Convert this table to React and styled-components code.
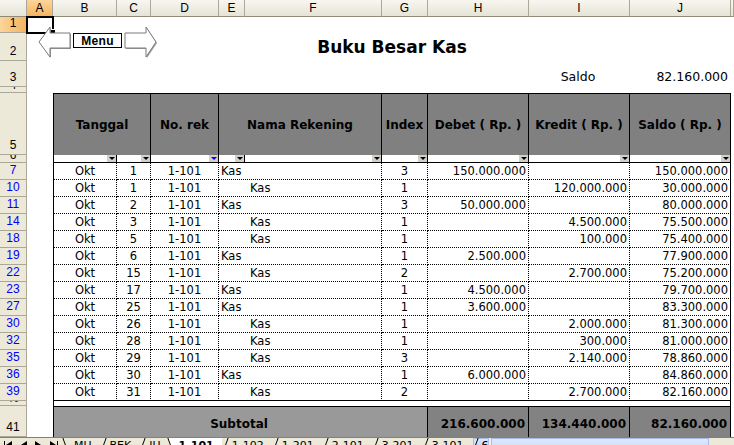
import React from 'react'
import styled, { createGlobalStyle, css } from 'styled-components'

const GlobalStyle = createGlobalStyle`
  html, body {
    margin: 0;
    padding: 0;
    background: #fff;
    overflow: hidden;
  }
  body {
    font-family: 'DejaVu Sans', 'Liberation Sans', sans-serif;
    color: #000;
  }
`

// row header + A..J + leftover strip
const COLS = '27px 26px 64px 34px 68px 26px 137px 46px 101px 101px 101px 1fr'

const Sheet = styled.div`
  position: relative;
  width: 734px;
  height: 445px;
  overflow: hidden;
  background: #fff;
`

const Row = styled.div`
  display: grid;
  grid-template-columns: ${COLS};
  height: ${(p) => p.$h}px;
`

const Cell = styled.div`
  grid-column: span ${(p) => p.$span || 1};
  box-sizing: border-box;
  min-width: 0;
  overflow: hidden;
`

const ColHead = styled(Cell)`
  display: flex;
  align-items: center;
  justify-content: center;
  font: 12px 'Liberation Sans', Arial, sans-serif;
  background: linear-gradient(#f7f6f0, #e6e4d6);
  border-right: 1px solid #aca899;
  border-bottom: 1px solid #8f8b78;
  ${(p) =>
    p.$active &&
    css`
      background: linear-gradient(#fcd69a, #f5b361);
      border-bottom-color: #b87a2c;
    `}
`

const RowHead = styled(Cell)`
  display: flex;
  align-items: flex-end;
  justify-content: center;
  padding-bottom: ${(p) => (p.$tight ? 0 : 2)}px;
  font: 12px/14px 'Liberation Sans', Arial, sans-serif;
  color: ${(p) => (p.$blue ? '#0000ff' : '#000')};
  background: #ece9d8;
  border-right: 1px solid #aca899;
  border-bottom: 1px solid #aca899;
  ${(p) =>
    p.$active &&
    css`
      background: linear-gradient(90deg, #fcd69a, #f5b361);
    `}
`

const TitleCell = styled(Cell)`
  display: flex;
  align-items: center;
  justify-content: center;
  font-size: 17px;
  font-weight: bold;
  white-space: nowrap;
`

const InfoCell = styled(Cell)`
  display: flex;
  align-items: flex-end;
  justify-content: ${(p) => (p.$right ? 'flex-end' : 'center')};
  padding: 0 3px 3px 0;
  font-size: 12.5px;
  white-space: nowrap;
`

const HeadCell = styled(Cell)`
  display: flex;
  align-items: center;
  justify-content: center;
  background: #808080;
  border-top: 1px solid #000;
  border-right: 1px solid #000;
  ${(p) => p.$first && 'border-left: 1px solid #000;'}
  font-size: 12px;
  font-weight: bold;
  white-space: nowrap;
`

const FilterCell = styled(Cell)`
  display: flex;
  justify-content: flex-end;
  border-right: 1px solid #000;
  border-bottom: 1px solid #000;
  ${(p) => p.$first && 'border-left: 1px solid #000;'}
`

const FilterBtn = styled.div`
  width: 9px;
  height: 7px;
  background: #d4d0c8;
  display: flex;
  align-items: center;
  justify-content: center;

  &::after {
    content: '';
    border-left: 3px solid transparent;
    border-right: 3px solid transparent;
    border-top: 3px solid ${(p) => (p.$on ? '#0000ff' : '#000')};
  }
`

const alignMap = { left: 'flex-start', right: 'flex-end', center: 'center' }

const DataCell = styled(Cell)`
  display: flex;
  align-items: center;
  justify-content: ${(p) => alignMap[p.$align || 'center']};
  padding: 0 2px 0 ${(p) => (p.$indent ? 31 : 2)}px;
  font-size: 11.5px;
  white-space: nowrap;
  border-bottom: 1px ${(p) => (p.$last ? 'solid' : 'dotted')} #000;
  border-right: 1px ${(p) => (p.$edge ? 'solid' : 'dotted')} #000;
  ${(p) => p.$first && 'border-left: 1px solid #000;'}
`

const GapCell = styled(Cell)`
  ${(p) => p.$first && 'border-left: 1px solid #000;'}
  ${(p) => p.$edge && 'border-right: 1px solid #000;'}
`

const SubCell = styled(Cell)`
  display: flex;
  align-items: center;
  justify-content: ${(p) => (p.$dark ? 'flex-end' : 'center')};
  padding: 3px 3px 0 0;
  background: ${(p) => (p.$dark ? '#828282' : '#999999')};
  border-top: 1px solid #000;
  border-right: 1px solid #000;
  ${(p) => p.$first && 'border-left: 1px solid #000;'}
  font-size: 12px;
  font-weight: bold;
  white-space: nowrap;
`

const Selection = styled.div`
  position: absolute;
  left: 26px;
  top: 16px;
  width: 28px;
  height: 18px;
  box-sizing: border-box;
  border: 2px solid #000;

  &::after {
    content: '';
    position: absolute;
    right: -4px;
    bottom: -4px;
    width: 5px;
    height: 5px;
    background: #000;
    border: 1px solid #fff;
  }
`

const NavShapes = styled.div`
  position: absolute;
  left: 36px;
  top: 25px;
  display: flex;
  align-items: flex-start;
  gap: 1px;
`

const MenuButton = styled.div`
  margin-top: 8px;
  width: 49px;
  height: 15px;
  box-sizing: border-box;
  border: 1px solid #000;
  background: #fff;
  display: flex;
  align-items: center;
  justify-content: center;
  font: bold 12px 'Liberation Sans', Arial, sans-serif;
  letter-spacing: 0.3px;
`

const TabBar = styled.div`
  display: flex;
  align-items: flex-start;
  height: 20px;
  background: #ece9d8;
  border-top: 1px solid #808080;
  font-size: 11px;
`

const NavArrows = styled.div`
  width: 64px;
  display: flex;
  gap: 6px;
  padding: 3px 0 0 4px;
  box-sizing: border-box;
`

const Tabs = styled.div`
  display: flex;
  width: 408px;
`

const Tab = styled.div`
  position: relative;
  padding: 1px 8px 0 10px;
  line-height: 14px;
  white-space: nowrap;
  ${(p) =>
    p.$active &&
    css`
      background: #fff;
      font-weight: bold;
    `}

  &::before {
    content: '';
    position: absolute;
    left: 2px;
    top: 0;
    height: 20px;
    border-left: 1px solid #000;
    transform: skewX(${(p) => (p.$back ? 20 : -20)}deg);
  }
`

const ScrollBar = styled.div`
  flex: 1;
  margin: 0 25px 0 1px;
  height: 16px;
  display: flex;
  background: #f3f1e7;
`

const ScrollBtn = styled.div`
  width: 16px;
  background: linear-gradient(#dbe6fc, #b9cdf7);
  border: 1px solid #a9bde8;
  box-sizing: border-box;
`

const ScrollThumb = styled.div`
  flex: 1;
  margin-left: 2px;
  background: linear-gradient(#dfe8fd, #c6d6fb);
  border: 1px solid #a9bde8;
  box-sizing: border-box;
`

const data = [
  [7, 1, 'd', 3, '150.000.000', '', '150.000.000'],
  [10, 1, 'k', 1, '', '120.000.000', '30.000.000'],
  [11, 2, 'd', 3, '50.000.000', '', '80.000.000'],
  [14, 3, 'k', 1, '', '4.500.000', '75.500.000'],
  [18, 5, 'k', 1, '', '100.000', '75.400.000'],
  [19, 6, 'd', 1, '2.500.000', '', '77.900.000'],
  [22, 15, 'k', 2, '', '2.700.000', '75.200.000'],
  [23, 17, 'd', 1, '4.500.000', '', '79.700.000'],
  [27, 25, 'd', 1, '3.600.000', '', '83.300.000'],
  [30, 26, 'k', 1, '', '2.000.000', '81.300.000'],
  [32, 28, 'k', 1, '', '300.000', '81.000.000'],
  [35, 29, 'k', 3, '', '2.140.000', '78.860.000'],
  [36, 30, 'd', 1, '6.000.000', '', '84.860.000'],
  [39, 31, 'k', 2, '', '2.700.000', '82.160.000'],
]

const letters = ['A', 'B', 'C', 'D', 'E', 'F', 'G', 'H', 'I', 'J']

const LeftArrow = () => (
  <svg width="36" height="34" viewBox="0 0 36 34">
    <polygon points="4,18 15,3 15,9 35,9 35,24 15,24 15,33" fill="#9a9a9a" />
    <polygon
      points="3,17 14,2 14,8 34,8 34,23 14,23 14,32"
      fill="#fff"
      stroke="#7a7a7a"
      strokeWidth="1"
    />
  </svg>
)

const RightArrow = () => (
  <svg width="36" height="34" viewBox="0 0 36 34">
    <polygon points="3,9 24,9 24,3 34,18 24,33 24,24 3,24" fill="#9a9a9a" />
    <polygon
      points="2,8 23,8 23,2 33,17 23,32 23,23 2,23"
      fill="#fff"
      stroke="#7a7a7a"
      strokeWidth="1"
    />
  </svg>
)

const Tri = ({ dir, bar }) => (
  <svg width="9" height="9" viewBox="0 0 9 9">
    {dir === 'l' ? (
      <polygon points="8,0 8,8 2,4" fill="#000" />
    ) : (
      <polygon points="1,0 1,8 7,4" fill="#000" />
    )}
    {bar && <rect x={dir === 'l' ? 0 : 8} y="0" width="1" height="8" fill="#000" />}
  </svg>
)

export default function App() {
  return (
    <>
      <GlobalStyle />
      <Sheet>
        <Row $h={17}>
          <ColHead />
          {letters.map((l) => (
            <ColHead key={l} $active={l === 'A'}>
              {l}
            </ColHead>
          ))}
          <ColHead />
        </Row>

        <Row $h={16}>
          <RowHead $active>1</RowHead>
        </Row>

        <Row $h={28}>
          <RowHead>2</RowHead>
          <Cell />
          <TitleCell $span={9}>Buku Besar Kas</TitleCell>
        </Row>

        <Row $h={26}>
          <RowHead>3</RowHead>
          <Cell $span={8} />
          <InfoCell>Saldo</InfoCell>
          <InfoCell $right>82.160.000</InfoCell>
        </Row>

        <Row $h={6}>
          <RowHead $tight>4</RowHead>
        </Row>

        <Row $h={62}>
          <RowHead>5</RowHead>
          <Cell />
          <HeadCell $span={2} $first>
            Tanggal
          </HeadCell>
          <HeadCell>No. rek</HeadCell>
          <HeadCell $span={2}>Nama Rekening</HeadCell>
          <HeadCell>Index</HeadCell>
          <HeadCell>Debet ( Rp. )</HeadCell>
          <HeadCell>Kredit ( Rp. )</HeadCell>
          <HeadCell>Saldo ( Rp. )</HeadCell>
        </Row>

        <Row $h={8}>
          <RowHead $tight>6</RowHead>
          <Cell />
          {letters.slice(1).map((l, i) => (
            <FilterCell key={l} $first={i === 0}>
              <FilterBtn $on={l === 'D'} />
            </FilterCell>
          ))}
        </Row>

        {data.map(([n, tgl, side, idx, debet, kredit, saldo], i) => {
          const last = i === data.length - 1
          return (
            <Row $h={17} key={n}>
              <RowHead $blue>{n}</RowHead>
              <Cell />
              <DataCell $first $last={last}>
                Okt
              </DataCell>
              <DataCell $last={last}>{tgl}</DataCell>
              <DataCell $last={last}>1-101</DataCell>
              <DataCell $span={2} $align="left" $indent={side === 'k'} $last={last}>
                Kas
              </DataCell>
              <DataCell $last={last}>{idx}</DataCell>
              <DataCell $align="right" $last={last}>
                {debet}
              </DataCell>
              <DataCell $align="right" $last={last}>
                {kredit}
              </DataCell>
              <DataCell $align="right" $edge $last={last}>
                {saldo}
              </DataCell>
            </Row>
          )
        })}

        <Row $h={5}>
          <RowHead $blue $tight>
            40
          </RowHead>
          <Cell />
          <GapCell $first $span={8} />
          <GapCell $edge />
        </Row>

        <Row $h={31}>
          <RowHead>41</RowHead>
          <Cell />
          <SubCell $span={6} $first>
            Subtotal
          </SubCell>
          <SubCell $dark>216.600.000</SubCell>
          <SubCell $dark>134.440.000</SubCell>
          <SubCell $dark>82.160.000</SubCell>
        </Row>

        <TabBar>
          <NavArrows>
            <Tri dir="l" bar />
            <Tri dir="l" />
            <Tri dir="r" />
            <Tri dir="r" bar />
          </NavArrows>
          <Tabs>
            <Tab $back>MU</Tab>
            <Tab>BEK</Tab>
            <Tab>JU</Tab>
            <Tab $active $back>
              1-101
            </Tab>
            <Tab>1-102</Tab>
            <Tab>1-201</Tab>
            <Tab>2-101</Tab>
            <Tab>3-201</Tab>
            <Tab>3-101</Tab>
            <Tab>6</Tab>
          </Tabs>
          <ScrollBar>
            <ScrollBtn />
            <ScrollThumb />
          </ScrollBar>
        </TabBar>

        <Selection />
        <NavShapes>
          <LeftArrow />
          <MenuButton>Menu</MenuButton>
          <RightArrow />
        </NavShapes>
      </Sheet>
    </>
  )
}
